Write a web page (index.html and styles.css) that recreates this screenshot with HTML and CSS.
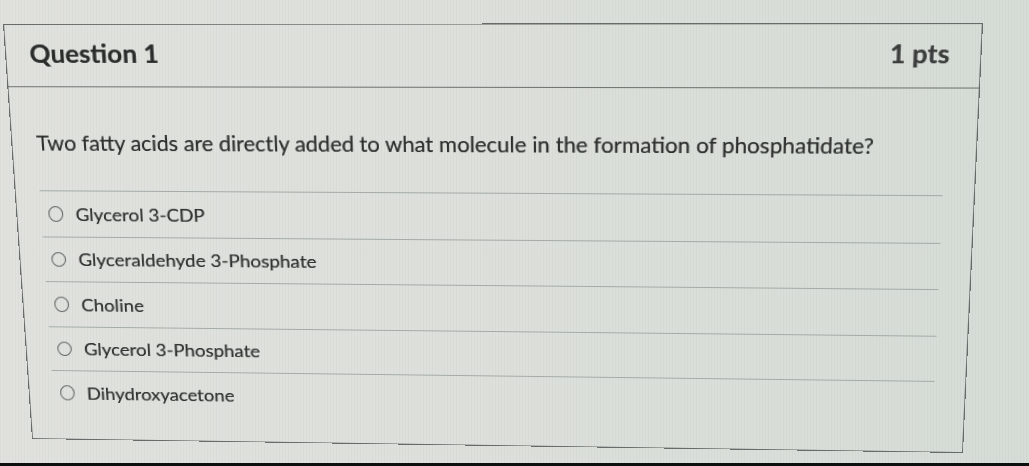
FILE: index.html
```html
<!DOCTYPE html>
<html lang="en">
<head>
<meta charset="utf-8">
<title>Question 1</title>
<link rel="stylesheet" href="styles.css">
</head>
<body>
<div class="screen">
  <div class="card">
    <div class="card-header">
      <span class="q-title">Question 1</span>
      <span class="q-points">1 pts</span>
    </div>
    <div class="card-body">
      <p class="q-text">Two fatty acids are directly added to what molecule in the formation of phosphatidate?</p>
      <ul class="answers">
        <li class="answer"><span class="radio"></span><span class="answer-label">Glycerol 3-CDP</span></li>
        <li class="answer"><span class="radio"></span><span class="answer-label">Glyceraldehyde 3-Phosphate</span></li>
        <li class="answer"><span class="radio"></span><span class="answer-label">Choline</span></li>
        <li class="answer"><span class="radio"></span><span class="answer-label">Glycerol 3-Phosphate</span></li>
        <li class="answer"><span class="radio"></span><span class="answer-label">Dihydroxyacetone</span></li>
      </ul>
    </div>
  </div>
  <div class="bezel"></div>
</div>
</body>
</html>
```
FILE: styles.css
```css
html, body {
  margin: 0;
  padding: 0;
}

body {
  font-family: Lato, "Open Sans", "Liberation Sans", sans-serif;
  color: #2c2e2d;
  background:
    repeating-linear-gradient(90deg, rgba(90, 100, 95, 0.045) 0 1px, transparent 1px 3px),
    linear-gradient(90deg, #e1e2de 0%, #dde0db 45%, #d6ddd6 100%);
}

.screen {
  height: 466px;
  display: flex;
  flex-direction: column;
  overflow: hidden;
}

/* photographed screen: the card is drawn in its own plane and projected */
.card {
  box-sizing: border-box;
  width: 889px;
  height: 425px;
  margin: 24px 0 0 3px;
  border: 1.3px solid #676b69;
  transform-origin: 0 0;
  transform: matrix3d(1.062047, -0.0010832, 0, -0.0000411384, 0.071772, 1.027096, 0, 0.000121991, 0, 0, 1, 0, 0, 0, 0, 1);
  flex: none;
}

.card-header {
  box-sizing: border-box;
  height: 61px;
  padding: 0 27px 6px 22px;
  display: flex;
  align-items: center;
  justify-content: space-between;
  border-bottom: 1px solid #6f7370;
}

.q-title,
.q-points {
  font-size: 24.5px;
  font-weight: 700;
  color: #2a2c2b;
  text-shadow: 0 0 0.6px rgba(30, 32, 31, 0.5);
}

.q-points {
  font-size: 24px;
  color: #3a3c3b;
}

.card-body {
  padding: 0 28px 0 23px;
}

.q-text {
  margin: 41px 0 0;
  font-size: 20.4px;
  line-height: 28px;
  color: #2c2e2d;
  text-shadow: 0 0 0.6px rgba(30, 32, 31, 0.6);
}

.answers {
  list-style: none;
  margin: 34px 0 0;
  padding: 0;
}

.answer {
  box-sizing: border-box;
  height: 46.5px;
  border-top: 1px solid #a3aaa7;
  display: flex;
  align-items: center;
  gap: 12px;
  padding-left: 6.5px;
}

.radio {
  box-sizing: border-box;
  width: 14.5px;
  height: 15.5px;
  border: 1.8px solid #5f6361;
  border-radius: 50%;
  flex: none;
}

.answer-label {
  font-size: 18px;
  color: #2e302f;
  text-shadow: 0 0 0.6px rgba(30, 32, 31, 0.6);
}

.bezel {
  margin-top: auto;
  height: 3px;
  background: #0d0e0e;
  flex: none;
}
```
